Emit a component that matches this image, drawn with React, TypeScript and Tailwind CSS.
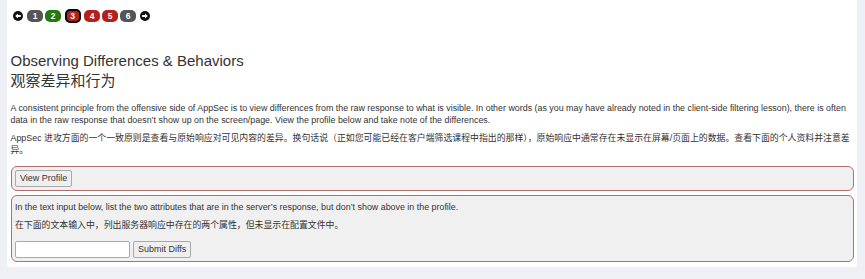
import React from 'react';

const font = { fontFamily: '"Liberation Sans", "Noto Sans CJK SC", Arial, sans-serif' };

type Step = { n: number; color: string; current?: boolean };

const steps: Step[] = [
  { n: 1, color: 'bg-[#555555]' },
  { n: 2, color: 'bg-[#237a0f]' },
  { n: 3, color: 'bg-[#b3211c]', current: true },
  { n: 4, color: 'bg-[#b3211c]' },
  { n: 5, color: 'bg-[#b3211c]' },
  { n: 6, color: 'bg-[#555555]' },
];

function Arrow({ dir }: { dir: 'left' | 'right' }) {
  return (
    <svg width="10" height="10" viewBox="0 0 10 10" className="shrink-0">
      <circle cx="5" cy="5" r="5" fill="#111" />
      {dir === 'left' ? (
        <path d="M2.2 5 L5 2.4 L5 4 L7.8 4 L7.8 6 L5 6 L5 7.6 Z" fill="#fff" />
      ) : (
        <path d="M7.8 5 L5 2.4 L5 4 L2.2 4 L2.2 6 L5 6 L5 7.6 Z" fill="#fff" />
      )}
    </svg>
  );
}

export default function App() {
  return (
    <div className="w-[865px] h-[279px] bg-[#eef0f6] flex text-[#333333]" style={font}>
      <div className="ml-[7px] w-[850px] h-[267px] bg-white rounded-b-[3px] px-[3.5px]">
        {/* lesson nav */}
        <div className="flex items-center h-[12px] mt-[10px] ml-[2.5px]">
          <Arrow dir="left" />
          <div className="flex items-center gap-[2px] ml-[4px] mr-[4px]">
            {steps.map((s) => (
              <span
                key={s.n}
                className={`${s.color} text-white font-bold text-[8.5px] leading-none flex items-center justify-center rounded-[5px] ${
                  s.current ? 'w-[16px] h-[14px] border-[2px] border-black mx-[1.5px]' : 'w-[16px] h-[12px]'
                }`}
              >
                {s.n}
              </span>
            ))}
          </div>
          <Arrow dir="right" />
        </div>

        {/* title */}
        <div className="mt-[29px] text-[15px] leading-[19px] text-[#333333]">
          <div>Observing Differences &amp; Behaviors</div>
          <div className="leading-[22px]">观察差异和行为</div>
        </div>

        <p className="mt-[10px] text-[8.9px] leading-[12.4px]">
          A consistent principle from the offensive side of AppSec is to view differences from the raw response to what is
          visible. In other words (as you may have already noted in the client-side filtering lesson), there is often data
          in the raw response that doesn’t show up on the screen/page. View the profile below and take note of the
          differences.
        </p>
        <p className="mt-[5px] text-[8.9px] leading-[12.4px]">
          AppSec 进攻方面的一个一致原则是查看与原始响应对可见内容的差异。换句话说（正如您可能已经在客户端筛选课程中指出的那样），原始响应中通常存在未显示在屏幕/页面上的数据。查看下面的个人资料并注意差异。
        </p>

        {/* view profile box */}
        <div className="mt-[9px] border-[1.5px] border-[#b56e6e] rounded-[6px] bg-[#f0f0f0] h-[25px] flex items-center px-[3.5px]">
          <button className="h-[17px] px-[4px] bg-[#efefef] border border-[#a9a9a9] rounded-[2px] text-[9px] text-[#333333] leading-none">
            View Profile
          </button>
        </div>

        {/* diffs box */}
        <div className="mt-[4px] border-[1.5px] border-[#b56e6e] rounded-[6px] bg-[#f0f0f0] h-[67px] px-[3.5px] pt-[5px]">
          <div className="text-[8.9px] leading-[12.4px]">
            In the text input below, list the two attributes that are in the server’s response, but don’t show above in the
            profile.
          </div>
          <div className="mt-[6px] text-[8.9px] leading-[12.4px]">
            在下面的文本输入中，列出服务器响应中存在的两个属性，但未显示在配置文件中。
          </div>
          <div className="mt-[10px] flex items-center gap-[3px]">
            <input
              type="text"
              className="w-[115px] h-[17px] bg-white border border-[#a9a9a9] rounded-[2px] outline-none"
            />
            <button className="h-[17px] px-[4px] bg-[#efefef] border border-[#a9a9a9] rounded-[2px] text-[9px] text-[#333333] leading-none">
              Submit Diffs
            </button>
          </div>
        </div>
      </div>
    </div>
  );
}
